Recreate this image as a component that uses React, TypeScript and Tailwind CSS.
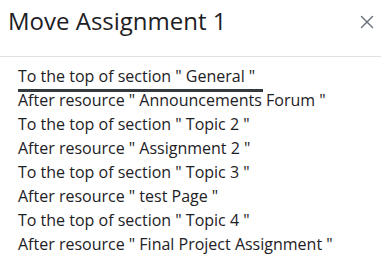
import { X } from "lucide-react";

const targets = [
  'To the top of section " General "',
  'After resource " Announcements Forum "',
  'To the top of section " Topic 2 "',
  'After resource " Assignment 2 "',
  'To the top of section " Topic 3 "',
  'After resource " test Page "',
  'To the top of section " Topic 4 "',
  'After resource " Final Project Assignment "',
];

export default function App() {
  return (
    <div className="h-[269px] w-[381px] bg-white text-[#1d2125]" style={{ fontFamily: '"Open Sans", sans-serif' }}>
      <div className="flex h-[57px] items-start justify-between border-b border-[#dee2e6] pl-2 pr-[3px]">
        <h1 className="pt-[9px] text-[24px] leading-[24px]">Move Assignment 1</h1>
        <X size={22} strokeWidth={1.6} className="mt-[11px] text-[#6a737b]" />
      </div>
      <ul className="pl-[18px] pt-[7px] text-[16px] leading-[24px]">
        {targets.map((t, i) => (
          <li key={t} className="h-[24px]">
            {i === 0 ? (
              <span className="inline-block border-b-[3px] border-[#343a40] pb-[1px] pr-2">{t}</span>
            ) : (
              t
            )}
          </li>
        ))}
      </ul>
    </div>
  );
}
